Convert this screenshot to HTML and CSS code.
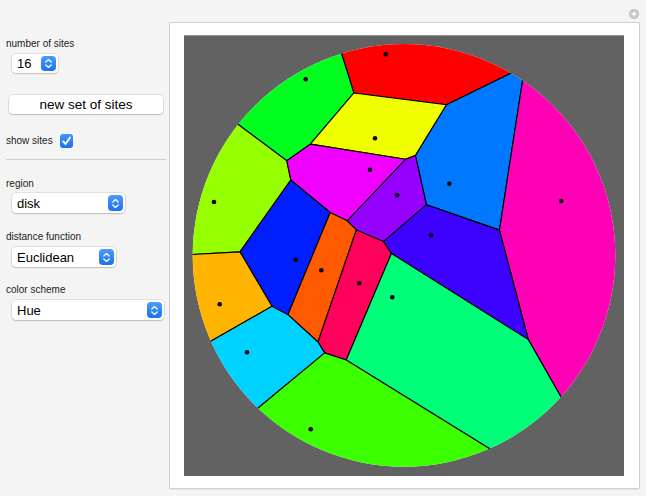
FILE: index.html
```html
<!DOCTYPE html>
<html>
<head>
<meta charset="utf-8">
<title>Voronoi diagram</title>
<link rel="stylesheet" href="styles.css">
</head>
<body>
<div class="window">
  <span class="add-btn" aria-label="more">
    <svg width="10" height="10" viewBox="0 0 10 10"><circle cx="5" cy="5" r="5" fill="#c4c4c4"/><path d="M5 2.4v5.2M2.4 5h5.2" stroke="#fff" stroke-width="1.6"/></svg>
  </span>
  <aside class="controls">
    <div class="label">number of sites</div>
    <div class="popup popup-num"><span>16</span><span class="stepper"><svg width="15" height="15" viewBox="0 0 15 15"><path d="M4.8 6 7.5 3.6 10.2 6M4.8 9 7.5 11.4 10.2 9" fill="none" stroke="#fff" stroke-width="1.3" stroke-linecap="round" stroke-linejoin="round"/></svg></span></div>
    <button class="btn">new set of sites</button>
    <div class="check-row">
      <span class="label">show sites</span>
      <span class="checkbox"><svg width="13" height="14" viewBox="0 0 13 14"><path d="M3.2 7.4 5.6 10 9.9 3.6" fill="none" stroke="#fff" stroke-width="1.9" stroke-linecap="round" stroke-linejoin="round"/></svg></span>
    </div>
    <hr class="sep">
    <div class="label label-region">region</div>
    <div class="popup popup-disk"><span>disk</span><span class="stepper"><svg width="15" height="15" viewBox="0 0 15 15"><path d="M4.8 6 7.5 3.6 10.2 6M4.8 9 7.5 11.4 10.2 9" fill="none" stroke="#fff" stroke-width="1.3" stroke-linecap="round" stroke-linejoin="round"/></svg></span></div>
    <div class="label label-dist">distance function</div>
    <div class="popup popup-dist"><span>Euclidean</span><span class="stepper"><svg width="15" height="15" viewBox="0 0 15 15"><path d="M4.8 6 7.5 3.6 10.2 6M4.8 9 7.5 11.4 10.2 9" fill="none" stroke="#fff" stroke-width="1.3" stroke-linecap="round" stroke-linejoin="round"/></svg></span></div>
    <div class="label label-color">color scheme</div>
    <div class="popup popup-hue"><span>Hue</span><span class="stepper"><svg width="15" height="15" viewBox="0 0 15 15"><path d="M4.8 6 7.5 3.6 10.2 6M4.8 9 7.5 11.4 10.2 9" fill="none" stroke="#fff" stroke-width="1.3" stroke-linecap="round" stroke-linejoin="round"/></svg></span></div>
  </aside>
  <main class="pane">
    <svg class="plot" id="plot" width="440" height="441" viewBox="184 35 440 441">
      <defs>
        <clipPath id="disk"><circle cx="404" cy="255.4" r="211.3"/></clipPath>
      </defs>
      <rect x="184" y="35" width="440" height="441" fill="#626262"/>
      <line x1="184" y1="35.5" x2="624" y2="35.5" stroke="#969696" stroke-width="1"/>
      <circle cx="404" cy="255.4" r="211.3" fill="#ffffff"/>
      <g id="cells" clip-path="url(#disk)"></g>
      <g id="sites" fill="#000">
        <circle cx="385.7" cy="54.3" r="2.3" data-fill="#ff0000"/>
        <circle cx="305.7" cy="79.3" r="2.3" data-fill="#00ff1e"/>
        <circle cx="375" cy="138.3" r="2.3" data-fill="#f0ff00"/>
        <circle cx="214" cy="202" r="2.3" data-fill="#96ff00"/>
        <circle cx="370" cy="169.7" r="2.3" data-fill="#f000ff"/>
        <circle cx="397" cy="195.3" r="2.3" data-fill="#9600ff"/>
        <circle cx="449.3" cy="183.7" r="2.3" data-fill="#0078ff"/>
        <circle cx="561.3" cy="201" r="2.3" data-fill="#ff00b4"/>
        <circle cx="431.3" cy="235.3" r="2.3" data-fill="#3c00ff"/>
        <circle cx="295.7" cy="259.7" r="2.3" data-fill="#001eff"/>
        <circle cx="321.3" cy="270.3" r="2.3" data-fill="#ff5a00"/>
        <circle cx="359.3" cy="283.3" r="2.3" data-fill="#ff005a"/>
        <circle cx="392.3" cy="297.3" r="2.3" data-fill="#00ff78"/>
        <circle cx="219.7" cy="304.3" r="2.3" data-fill="#ffb400"/>
        <circle cx="247" cy="352.3" r="2.3" data-fill="#00d2ff"/>
        <circle cx="310.7" cy="429.3" r="2.3" data-fill="#3cff00"/>
      </g>
    </svg>
  </main>
</div>
<script src="script.js"></script>
</body>
</html>
```

FILE: styles.css
```css
html, body {
  margin: 0;
  padding: 0;
  background: #f4f4f4;
}

.window {
  position: relative;
  display: flex;
  align-items: flex-start;
  width: 646px;
  height: 496px;
  background: #f4f4f4;
  font-family: "Liberation Sans", Arial, sans-serif;
  color: #111;
  overflow: hidden;
}

.add-btn {
  position: absolute;
  top: 9px;
  left: 629px;
  width: 10px;
  height: 10px;
  display: block;
}

.add-btn svg {
  display: block;
}

.controls {
  width: 169px;
  flex: none;
  box-sizing: border-box;
  padding: 36px 0 0 6px;
  display: flex;
  flex-direction: column;
  align-items: flex-start;
}

.label {
  font-size: 10px;
  line-height: 16px;
  color: #1c1c1c;
  white-space: nowrap;
}

.popup {
  box-sizing: border-box;
  display: flex;
  align-items: center;
  justify-content: space-between;
  height: 20px;
  margin-left: 6px;
  padding: 0 2px 0 5px;
  background: #ffffff;
  border-radius: 4px;
  box-shadow: 0 0 0 0.5px rgba(0, 0, 0, 0.16), 0 1px 1.5px rgba(0, 0, 0, 0.16);
  font-size: 13px;
  color: #000;
}

.popup-num {
  width: 46px;
  height: 19px;
  margin-top: 2px;
}

.popup-disk {
  width: 113px;
  margin-top: 1px;
}

.popup-dist {
  width: 104px;
  margin-top: 2px;
}

.popup-hue {
  width: 152px;
  margin-top: 2px;
}

.stepper {
  width: 15px;
  height: 16px;
  border-radius: 4px;
  background: linear-gradient(#4b9bff, #1a72f0);
  display: flex;
  align-items: center;
  justify-content: center;
}

.popup-num .stepper {
  height: 15px;
}

.stepper svg {
  display: block;
}

.btn {
  margin: 22px 0 0 3px;
  width: 154px;
  height: 19px;
  padding: 0;
  border: none;
  border-radius: 4px;
  background: #ffffff;
  box-shadow: 0 0 0 0.5px rgba(0, 0, 0, 0.16), 0 1px 1.5px rgba(0, 0, 0, 0.16);
  font-family: "Liberation Sans", Arial, sans-serif;
  font-size: 13.5px;
  line-height: 19px;
  color: #000;
  text-align: center;
}

.check-row {
  display: flex;
  align-items: center;
  gap: 7px;
  height: 14px;
  margin-top: 20px;
}

.check-row .label {
  line-height: 14px;
}

.checkbox {
  width: 13px;
  height: 14px;
  border-radius: 3px;
  background: linear-gradient(#3f94ff, #1b72f0);
  display: block;
}

.checkbox svg {
  display: block;
}

.sep {
  width: 160px;
  height: 1px;
  margin: 11px 0 0 0;
  border: none;
  background: #cdcdcd;
}

.label-region {
  margin-top: 16px;
}

.label-dist {
  margin-top: 16px;
}

.label-color {
  margin-top: 15px;
}

.pane {
  flex: none;
  box-sizing: border-box;
  width: 471px;
  height: 467px;
  margin-top: 22px;
  padding: 12px 15px 12px 14px;
  background: #ffffff;
  border: 1px solid #cfcfcf;
  border-radius: 2px;
  box-shadow: 0 1px 1px rgba(0, 0, 0, 0.06);
}

.plot {
  display: block;
}
```

FILE: script.js
```js
(function () {
  var NS = "http://www.w3.org/2000/svg";
  var CX = 404, CY = 255.4, R = 215;
  var dots = document.querySelectorAll("#sites circle");
  var sites = [];
  for (var i = 0; i < dots.length; i++) {
    sites.push({
      x: parseFloat(dots[i].getAttribute("cx")),
      y: parseFloat(dots[i].getAttribute("cy")),
      fill: dots[i].getAttribute("data-fill")
    });
  }

  function clip(poly, a, b, c) {
    var out = [];
    for (var k = 0; k < poly.length; k++) {
      var P = poly[k], Q = poly[(k + 1) % poly.length];
      var fp = a * P[0] + b * P[1] - c;
      var fq = a * Q[0] + b * Q[1] - c;
      if (fp <= 0) out.push(P);
      if ((fp < 0 && fq > 0) || (fp > 0 && fq < 0)) {
        var t = fp / (fp - fq);
        out.push([P[0] + t * (Q[0] - P[0]), P[1] + t * (Q[1] - P[1])]);
      }
    }
    return out;
  }

  var base = [];
  var N = 240;
  for (var n = 0; n < N; n++) {
    var ang = (n / N) * Math.PI * 2;
    base.push([CX + R * Math.cos(ang), CY + R * Math.sin(ang)]);
  }

  var group = document.getElementById("cells");
  sites.forEach(function (s, i) {
    var poly = base.slice();
    sites.forEach(function (o, j) {
      if (i === j) return;
      var a = 2 * (o.x - s.x);
      var b = 2 * (o.y - s.y);
      var c = o.x * o.x + o.y * o.y - s.x * s.x - s.y * s.y;
      poly = clip(poly, a, b, c);
    });
    if (poly.length < 3) return;
    var el = document.createElementNS(NS, "polygon");
    el.setAttribute("points", poly.map(function (p) {
      return p[0].toFixed(2) + "," + p[1].toFixed(2);
    }).join(" "));
    el.setAttribute("fill", s.fill);
    el.setAttribute("stroke", "#000");
    el.setAttribute("stroke-width", "1.1");
    el.setAttribute("stroke-linejoin", "round");
    group.appendChild(el);
  });
})();
```
